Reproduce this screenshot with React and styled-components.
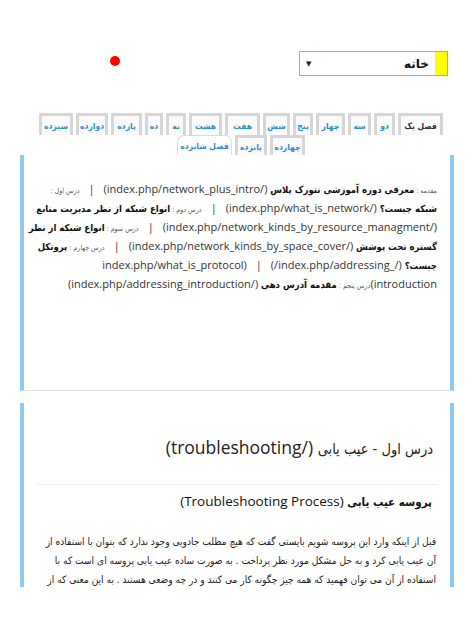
import styled, { createGlobalStyle } from 'styled-components'

const GlobalStyle = createGlobalStyle`
  body {
    margin: 0;
    background: #fff;
    font-family: "Open Sans", "DejaVu Sans", sans-serif;
    color: #333;
  }
`

const Header = styled.header`
  display: flex;
  align-items: center;
  height: 76px;
  box-sizing: border-box;
  padding: 51px 26px 0 110px;
`

const Dot = styled.span`
  width: 10px;
  height: 10px;
  border-radius: 50%;
  background: #f00;
  margin-top: -5px;
`

const Select = styled.div`
  margin-left: auto;
  width: 149px;
  height: 25px;
  box-sizing: border-box;
  border: 1px solid #aaa;
  display: flex;
  align-items: center;
  direction: rtl;
`

const Marker = styled.span`
  align-self: stretch;
  width: 12px;
  background: #ffff00;
`

const SelectLabel = styled.span`
  padding-right: 6px;
  font-family: "DejaVu Sans", sans-serif;
  font-size: 12px;
  font-weight: bold;
  color: #111;
`

const Arrow = styled.span`
  margin-right: auto;
  padding-left: 6px;
  font-size: 7px;
  color: #222;
`

const Tabs = styled.nav`
  margin-top: 37px;
  padding: 0 16px 0 24px;
`

const TabRow = styled.div`
  display: flex;
  direction: rtl;
  justify-content: center;
  gap: 3px;
`

const Tab = styled.a`
  width: ${(p) => p.$w}px;
  height: ${(p) => p.$h}px;
  box-sizing: border-box;
  display: flex;
  align-items: center;
  justify-content: center;
  border: 3px solid #d6d6d6;
  border-bottom: 0;
  background: #fafafa;
  font-family: "DejaVu Sans", sans-serif;
  font-stretch: condensed;
  font-size: 8.5px;
  font-weight: bold;
  white-space: nowrap;
  color: ${(p) => (p.$dark ? '#333' : '#2b8fd1')};
  text-decoration: none;
`

const ActiveTab = styled(Tab)`
  border: 1px solid #dcdcdc;
  border-bottom: 0;
  border-radius: 7px 7px 0 0;
  background: #fff;
`

const Card = styled.section`
  margin: ${(p) => p.$top}px 20px 0;
  height: ${(p) => p.$h}px;
  box-sizing: border-box;
  overflow: hidden;
  border-left: 4px solid #8fcaf5;
  border-right: 4px solid #8fcaf5;
  border-bottom: ${(p) => (p.$line ? '1px solid #e4e4e4' : '0')};
  padding: ${(p) => p.$pad};
  direction: rtl;
`

const Lessons = styled.p`
  margin: 0;
  font-size: 11px;
  line-height: 19px;
  text-align: right;
  white-space: nowrap;
  color: #333;
`

const Small = styled.span`
  font-family: "DejaVu Sans", sans-serif;
  font-stretch: condensed;
  font-size: 7px;
  line-height: 1;
  color: #555;
`

const Strong = styled.b`
  font-family: "DejaVu Sans", sans-serif;
  font-stretch: condensed;
  font-size: 9.5px;
  line-height: 1;
  color: #111;
`

const Ltr = styled.span`
  direction: ltr;
  unicode-bidi: isolate;
`

const Sep = styled.span`
  padding: 0 9px;
`

const Persian = styled.span`
  font-family: "DejaVu Sans", sans-serif;
  font-stretch: condensed;
  font-size: ${(p) => p.$size}px;
  font-weight: ${(p) => (p.$bold ? 'bold' : 'normal')};
`

const Title = styled.h1`
  margin: 0 4px 23px 0;
  font-family: "Open Sans", "DejaVu Sans", sans-serif;
  font-size: 17.5px;
  line-height: 24px;
  font-weight: normal;
  color: #222;
`

const Rule = styled.hr`
  margin: 0;
  border: 0;
  border-top: 1px solid #eeeeee;
`

const SubTitle = styled.h2`
  margin: 6px 5px 20px 0;
  font-family: "Open Sans", "DejaVu Sans", sans-serif;
  font-size: 13.5px;
  line-height: 20px;
  font-weight: normal;
  color: #111;
`

const Body = styled.p`
  margin: 0 1px 0 3px;
  font-family: "DejaVu Sans", sans-serif;
  font-stretch: condensed;
  font-size: 10.1px;
  line-height: 19px;
  text-align: right;
  color: #222;
`

const row1 = [
  ['فصل یک', 45, true],
  ['دو', 21],
  ['سه', 23],
  ['چهار', 29],
  ['پنج', 20],
  ['شش', 27],
  ['هفت', 35],
  ['هشت', 33],
  ['نه', 20],
  ['ده', 18],
  ['پازده', 31],
  ['دوازده', 32],
  ['سیزده', 34],
]

const row2 = [
  ['چهارده', 35],
  ['پانزده', 32],
]

const App = () => {
  return (
    <>
      <GlobalStyle />
      <Header>
        <Dot />
        <Select>
          <Marker />
          <SelectLabel>خانه</SelectLabel>
          <Arrow>▼</Arrow>
        </Select>
      </Header>

      <Tabs>
        <TabRow>
          {row1.map(([label, w, dark]) => (
            <Tab key={label} $w={w} $h={22} $dark={dark} href="#">
              {label}
            </Tab>
          ))}
        </TabRow>
        <TabRow>
          {row2.map(([label, w]) => (
            <Tab key={label} $w={w} $h={20} href="#">
              {label}
            </Tab>
          ))}
          <ActiveTab $w={55} $h={20} href="#">
            فصل شانزده
          </ActiveTab>
        </TabRow>
      </Tabs>

      <Card $top={0} $h={236} $line $pad="24px 13px 0 14px">
        <Lessons>
          <Small>مقدمه : </Small>
          <Strong>معرفی دوره آموزشی نتورک پلاس</Strong> (/index.php/network_plus_intro)
          <Sep>|</Sep>
          <Small>درس اول : </Small>
          <br />
          <Strong>شبکه چیست؟</Strong> (/index.php/what_is_network)
          <Sep>|</Sep>
          <Small>درس دوم : </Small>
          <Strong>انواع شبکه از نظر مدیریت منابع</Strong>
          <br />
          (/index.php/network_kinds_by_resource_managment)
          <Sep>|</Sep>
          <Small>درس سوم : </Small>
          <Strong>انواع شبکه از نظر</Strong>
          <br />
          <Strong>گستره تحت پوشش</Strong> (/index.php/network_kinds_by_space_cover)
          <Sep>|</Sep>
          <Small>درس چهارم : </Small>
          <Strong>پروتکل</Strong>
          <br />
          <Strong>چیست؟</Strong> (/
          <Ltr>
            index.php/what_is_protocol)<Sep>|</Sep>(/index.php/addressing_
          </Ltr>
          <br />
          introduction)<Small>درس پنجم : </Small>
          <Strong>مقدمه آدرس دهی</Strong> (/index.php/addressing_introduction)
        </Lessons>
      </Card>

      <Card $top={12} $h={184} $pad="32px 13px 0 13px">
        <Title>
          <Persian $size={14.5}>درس اول - عیب یابی</Persian> (/troubleshooting)
        </Title>
        <Rule />
        <SubTitle>
          <Persian $size={11.5} $bold>
            پروسه عیب یابی
          </Persian>{' '}
          (Troubleshooting Process)
        </SubTitle>
        <Body>
          قبل از اینکه وارد این پروسه شویم بایستی گفت که هیچ مطلب جادویی وجود
          ندارد که بتوان با استفاده از آن عیب یابی کرد و به حل مشکل مورد نظر
          پرداخت . به صورت ساده عیب یابی پروسه ای است که با استفاده از آن می توان
          فهمید که همه چیز چگونه کار می کنند و در چه وضعی هستند . به این معنی که
          از
        </Body>
      </Card>
    </>
  )
}

export default App
